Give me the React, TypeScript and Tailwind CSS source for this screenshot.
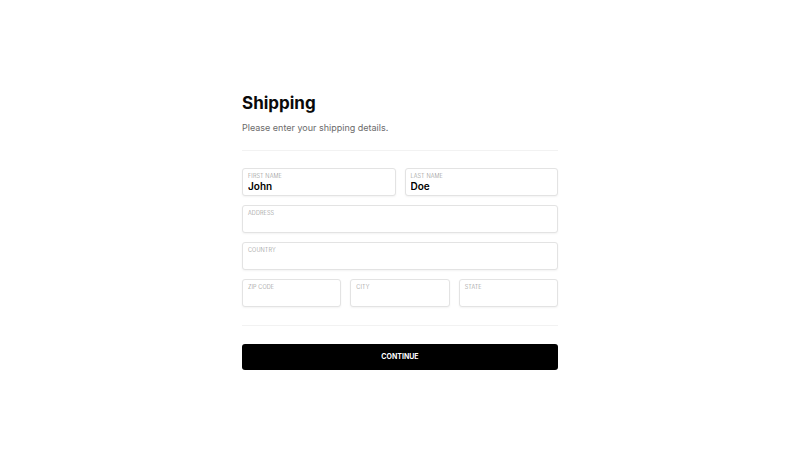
import React from 'react'

type FieldProps = {
  label: string
  value?: string
  className?: string
}

const Field: React.FC<FieldProps> = ({ label, value, className }) => {
  return (
    <label
      className={`flex flex-col h-[28px] rounded-[3px] border border-[#e3e3e3] bg-white px-[5px] pt-[4px] shadow-[0_1px_2px_rgba(0,0,0,0.05)] ${className ?? ''}`}
    >
      <span className="text-[5.5px] leading-[7px] font-light uppercase tracking-[0.02em] text-[#8f8f8f]">{label}</span>
      <input
        defaultValue={value}
        className="w-full bg-transparent text-[10px] leading-[13px] font-semibold text-black outline-none"
      />
    </label>
  )
}

const App: React.FC = () => {
  return (
    <section className="min-h-screen w-full bg-white flex justify-center" style={{ fontFamily: 'Inter, "Noto Sans", sans-serif' }}>
      <div className="w-[316px] pt-[91px]">
        <h1 className="text-[17px] leading-[24px] font-bold text-[#0a0a0a]">Shipping</h1>
        <p className="mt-[6px] text-[9px] leading-[14px] text-[#6b6b6b]">Please enter your shipping details.</p>

        <div className="mt-[15px] border-t border-[#f2f2f2]" />

        <div className="mt-[17px] flex flex-col gap-[9px]">
          <div className="grid grid-cols-2 gap-[9px]">
            <Field label="First name" value="John" />
            <Field label="Last name" value="Doe" />
          </div>
          <Field label="Address" />
          <Field label="Country" />
          <div className="grid grid-cols-3 gap-[9px]">
            <Field label="Zip code" />
            <Field label="City" />
            <Field label="State" />
          </div>
        </div>

        <div className="mt-[18px] border-t border-[#f2f2f2]" />

        <button className="mt-[18px] w-full h-[26px] rounded-[3px] bg-black text-white text-[7px] font-bold uppercase">
          Continue
        </button>
      </div>
    </section>
  )
}

export default App
